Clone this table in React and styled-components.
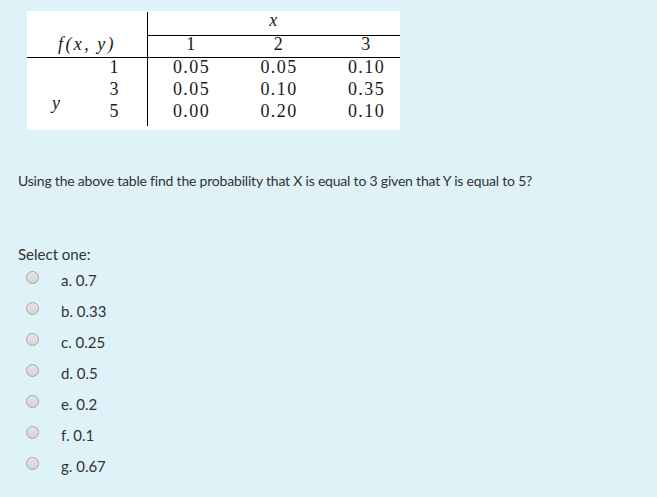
import React from "react";
import styled, { createGlobalStyle } from "styled-components";

const Global = createGlobalStyle`
  html, body { margin: 0; padding: 0; background: #def2f8; }
  body { font-family: Lato, "Open Sans", "Liberation Sans", sans-serif; color: #333; }
`;

const Page = styled.div`
  padding: 11px 0 0 18px;
  height: 486px;
  box-sizing: border-box;
`;

const TableBox = styled.div`
  margin-left: 9px;
  width: 373px;
  background: #fff;
  padding: 1px 0 4px;
`;

const Table = styled.table`
  border-collapse: separate;
  border-spacing: 0;
  width: 373px;
  font-family: "Liberation Serif", serif;
  font-size: 18px;
  letter-spacing: 1.4px;
  color: #1a1a1a;
  td {
    padding: 0;
    vertical-align: top;
  }
`;

const Cell = styled.td`
  && {
    text-align: ${(p) => p.$align || "center"};
    border-right: ${(p) => (p.$vline ? "1px solid #000" : "none")};
    border-bottom: ${(p) => (p.$hline ? "1px solid #000" : "none")};
    padding-left: ${(p) => p.$pl || 0}px;
    padding-right: ${(p) => p.$pr || 0}px;
    padding-top: ${(p) => p.$pt || 0}px;
    height: ${(p) => p.$h || 22}px;
    line-height: ${(p) => p.$lh || 19}px;
    width: ${(p) => (p.$w ? p.$w + "px" : "auto")};
    box-sizing: content-box;
  }
`;

const MathVar = styled.span`
  font-style: italic;
  letter-spacing: ${(p) => p.$ls || 1.4}px;
`;

const Question = styled.p`
  margin: 40px 0 0;
  font-size: 14px;
  letter-spacing: -0.2px;
  line-height: 21px;
`;

const Prompt = styled.div`
  margin-top: 53px;
  font-size: 15px;
  line-height: 21px;
`;

const Options = styled.div`
  display: flex;
  flex-direction: column;
`;

const Option = styled.label`
  display: flex;
  align-items: flex-start;
  height: 31px;
  padding-left: 8px;
  font-size: 15px;
  line-height: 31px;
`;

const Radio = styled.span`
  width: 11px;
  height: 11px;
  margin-top: 6px;
  border-radius: 50%;
  border: 1px solid #a6a6a6;
  background: linear-gradient(#e6e6e6, #d4d4d4);
  flex: none;
`;

const OptionText = styled.span`
  margin-left: 22px;
`;

const rows = [
  ["1", "0.05", "0.05", "0.10"],
  ["3", "0.05", "0.10", "0.35"],
  ["5", "0.00", "0.20", "0.10"],
];

const options = ["a. 0.7", "b. 0.33", "c. 0.25", "d. 0.5", "e. 0.2", "f. 0.1", "g. 0.67"];

export default function App() {
  return (
    <>
      <Global />
      <Page>
        <TableBox>
          <Table>
            <tbody>
              <tr>
                <Cell colSpan={2} $vline $h={23} />
                <Cell colSpan={3} $hline $h={23} $lh={17}>
                  <MathVar>x</MathVar>
                </Cell>
              </tr>
              <tr>
                <Cell colSpan={2} $vline $hline $h={21} $lh={17}>
                  <MathVar $ls={2.4}>f(x,&thinsp;y)</MathVar>
                </Cell>
                <Cell $hline $h={21} $lh={17} $w={87}>1</Cell>
                <Cell $hline $h={21} $lh={17} $w={88}>2</Cell>
                <Cell $hline $h={21} $lh={17} $w={67} $pl={10}>3</Cell>
              </tr>
              {rows.map((r, i) => (
                <tr key={r[0]}>
                  {i === 0 && (
                    <Cell rowSpan={3} $align="left" $pl={25} $pt={36} $w={35}>
                      <MathVar>y</MathVar>
                    </Cell>
                  )}
                  <Cell $align="right" $vline $pr={27} $w={33} $h={i === 2 ? 24 : 22}>
                    {r[0]}
                  </Cell>
                  <Cell $h={i === 2 ? 24 : 22}>{r[1]}</Cell>
                  <Cell $h={i === 2 ? 24 : 22}>{r[2]}</Cell>
                  <Cell $pl={10} $h={i === 2 ? 24 : 22}>{r[3]}</Cell>
                </tr>
              ))}
            </tbody>
          </Table>
        </TableBox>
        <Question>
          Using the above table find the probability that X is equal to 3 given that Y is equal to 5?
        </Question>
        <Prompt>Select one:</Prompt>
        <Options>
          {options.map((o) => (
            <Option key={o}>
              <Radio />
              <OptionText>{o}</OptionText>
            </Option>
          ))}
        </Options>
      </Page>
    </>
  );
}
